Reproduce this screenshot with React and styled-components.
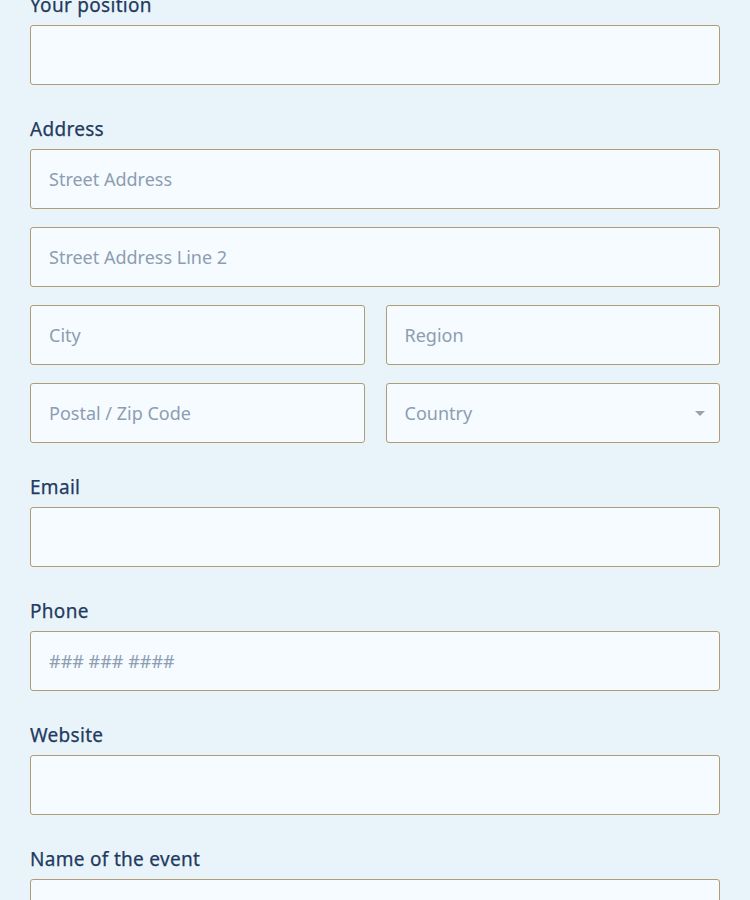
import React from "react";
import styled, { createGlobalStyle } from "styled-components";

const Global = createGlobalStyle`
  html, body { margin: 0; padding: 0; background: #e9f4fa; }
  body { font-family: "Noto Sans", "Open Sans", sans-serif; }
  * { box-sizing: border-box; }
`;

const Form = styled.form`
  margin-top: -9px;
  padding: 0 30px 0 30px;
  display: flex;
  flex-direction: column;
  gap: 30px;
`;

const Field = styled.div`
  display: flex;
  flex-direction: column;
  gap: 10px;
`;

const Label = styled.label`
  display: block;
  height: 24px;
  line-height: 28px;
  font-size: 19px;
  font-weight: 400;
  color: #233a60;
  letter-spacing: 0.3px;
  -webkit-text-stroke: 0.25px #233a60;
`;

const Stack = styled.div`
  display: flex;
  flex-direction: column;
  gap: 18px;
`;

const Row = styled.div`
  display: grid;
  grid-template-columns: 1fr 1fr;
  column-gap: 21px;
`;

const Input = styled.input`
  width: 100%;
  height: 60px;
  padding: 0 18px;
  border: 1px solid #b09c73;
  border-radius: 3px;
  background: #f5fbfe;
  font-family: "Noto Sans", "Open Sans", sans-serif;
  font-size: 18px;
  color: #2a3d62;
  outline: none;
  &::placeholder { color: #8d9db2; }
`;

const SelectBox = styled.div`
  position: relative;
  height: 60px;
  border: 1px solid #b09c73;
  border-radius: 3px;
  background: #f5fbfe;
  display: flex;
  align-items: center;
  padding: 0 18px;
  font-size: 18px;
  color: #8d9db2;
`;

const Caret = styled.span`
  position: absolute;
  right: 14px;
  top: 50%;
  margin-top: -2px;
  width: 0;
  height: 0;
  border-left: 5px solid transparent;
  border-right: 5px solid transparent;
  border-top: 5px solid #9aa1a8;
`;

export default function App() {
  return (
    <>
      <Global />
      <Form onSubmit={(e) => e.preventDefault()}>
        <Field>
          <Label>Your position</Label>
          <Input />
        </Field>
        <Field>
          <Label>Address</Label>
          <Stack>
            <Input placeholder="Street Address" />
            <Input placeholder="Street Address Line 2" />
            <Row>
              <Input placeholder="City" />
              <Input placeholder="Region" />
            </Row>
            <Row>
              <Input placeholder="Postal / Zip Code" />
              <SelectBox>
                Country
                <Caret />
              </SelectBox>
            </Row>
          </Stack>
        </Field>
        <Field>
          <Label>Email</Label>
          <Input />
        </Field>
        <Field>
          <Label>Phone</Label>
          <Input placeholder="### ### ####" />
        </Field>
        <Field>
          <Label>Website</Label>
          <Input />
        </Field>
        <Field>
          <Label>Name of the event</Label>
          <Input />
        </Field>
      </Form>
    </>
  );
}
